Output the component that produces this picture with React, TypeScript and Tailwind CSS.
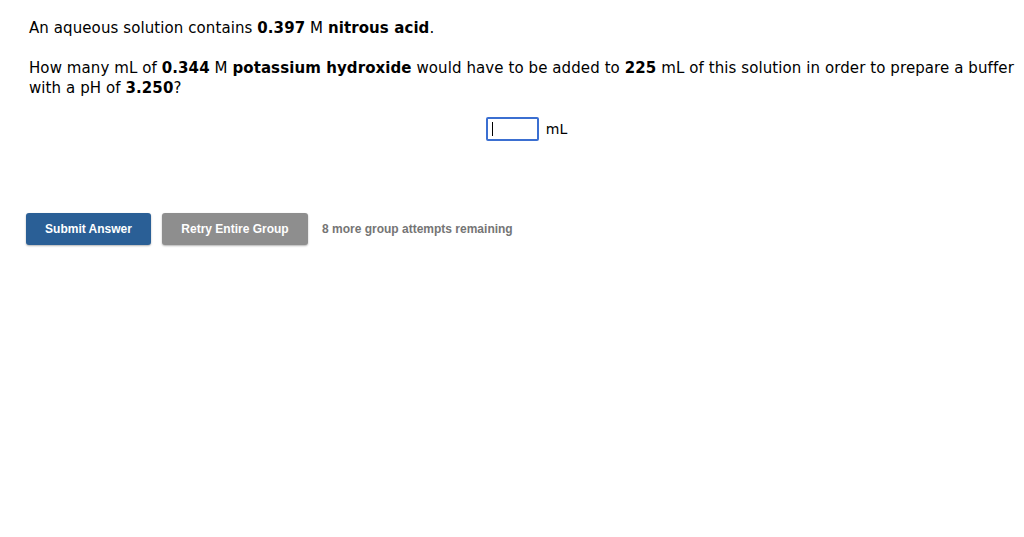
export default function App() {
  return (
    <div className="min-h-[537px] w-[1024px] bg-white text-black">
      <div className="pl-[29px] pr-[4px] pt-[18px] font-['DejaVu_Sans',Verdana,sans-serif] text-[15px] leading-[20px] tracking-[0.09px]">
        <p>
          An aqueous solution contains <b>0.397</b> M <b>nitrous acid</b>.
        </p>
        <p className="mt-[20px]">
          How many mL of <b>0.344</b> M <b>potassium hydroxide</b> would have to be added to <b>225</b> mL of this
          solution in order to prepare a buffer with a pH of <b>3.250</b>?
        </p>
        <div className="mt-[19px] flex items-center justify-center gap-[7px] pl-[4px]">
          <div className="flex h-[24px] w-[53px] items-center rounded-[2px] border-2 border-[#3b6fd1] pl-[4px]">
            <span className="h-[14px] w-px bg-black" />
          </div>
          <span className="text-[14px]">mL</span>
        </div>
      </div>
      <div className="mt-[72px] flex items-center pl-[26px] font-['Liberation_Sans',Arial,sans-serif] text-[12px] font-bold">
        <button className="h-[32px] w-[125px] rounded-[3px] bg-[#2a5f96] text-white shadow-[0_1px_2px_rgba(0,0,0,0.3)]">
          Submit Answer
        </button>
        <button className="ml-[11px] h-[32px] w-[146px] rounded-[3px] bg-[#8e8e8e] text-white shadow-[0_1px_2px_rgba(0,0,0,0.3)]">
          Retry Entire Group
        </button>
        <span className="ml-[14px] text-[#757575]">8 more group attempts remaining</span>
      </div>
    </div>
  );
}
